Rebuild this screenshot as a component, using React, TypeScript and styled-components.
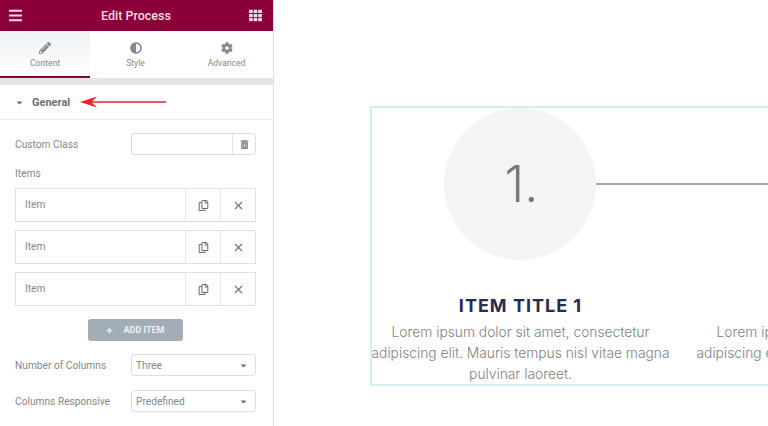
import React from "react";
import styled, { createGlobalStyle } from "styled-components";
import { FaBars, FaTh, FaPencilAlt, FaAdjust, FaCog, FaTrashAlt, FaRegCopy, FaPlus, FaCaretDown } from "react-icons/fa";
import { X } from "lucide-react";

const Global = createGlobalStyle`
  html, body { margin: 0; padding: 0; background: #fff; }
  * { box-sizing: border-box; }
`;
const Page = styled.div`
  display: flex; width: 768px; height: 426px; overflow: hidden; background: #fff;
  font-family: Roboto, "Liberation Sans", sans-serif;
`;
const Panel = styled.aside`
  flex: 0 0 274px; height: 426px; overflow: hidden; border-right: 1px solid #dfe2e5; background: #fff;
`;
const Header = styled.header`
  height: 31px; background: #8c003a; color: #f3dbe4; display: flex; align-items: center; justify-content: space-between;
  padding: 0 11px 0 8px; font-size: 12.5px; font-weight: 500;
  svg { display: block; }
`;
const Tabs = styled.nav`
  display: flex; height: 47px; background: #fff;
`;
const Tab = styled.div<{ $active?: boolean }>`
  flex: 0 0 91px; display: flex; flex-direction: column; align-items: center; padding-top: 11px; gap: 4px;
  color: #85898e; font-size: 8.5px;
  background: ${(p) => (p.$active ? "linear-gradient(#eef1f4, #fff)" : "#fff")};
  border-bottom: 2px solid ${(p) => (p.$active ? "#8c003a" : "transparent")};
  &:first-child { flex-basis: 90px; }
  svg { font-size: 12px; display: block; }
`;
const Band = styled.div`
  height: 7px; background: #e4e6e9;
`;
const SectionHead = styled.div`
  height: 35px; display: flex; align-items: center; padding-left: 15px; border-bottom: 1px solid #e8eaec;
  color: #6a6f75; font-size: 11px; font-weight: 700;
  svg.caret { font-size: 9px; margin-right: 8px; }
`;
const Arrow = styled.svg`
  margin-left: 10px; display: block;
`;
const Body = styled.div`
  padding: 13px 17px 0 15px; display: flex; flex-direction: column;
`;
const Control = styled.div<{ $mt?: number }>`
  display: flex; align-items: center; justify-content: space-between; height: 22px; margin-top: ${(p) => p.$mt ?? 0}px;
`;
const Label = styled.label`
  color: #84878c; font-size: 10.2px;
`;
const ItemsLabel = styled(Label)`
  margin-top: 12px; line-height: 13px;
`;
const InputGroup = styled.div`
  width: 125px; height: 22px; display: flex; border: 1px solid #dcdfe2; border-radius: 3px; background: #fff;
`;
const InputField = styled.div`
  flex: 1;
`;
const InputIcon = styled.div`
  flex: 0 0 23px; border-left: 1px solid #e2e4e7; display: flex; align-items: center; justify-content: center; color: #7d8288;
  svg { font-size: 9px; }
`;
const Row = styled.div`
  height: 34px; margin-top: 8px; display: flex; border: 1px solid #dfe2e5; background: #fff;
`;
const RowTitle = styled.div`
  flex: 1; padding: 0 0 2px 9px; display: flex; align-items: center; color: #84878c; font-size: 10.2px;
`;
const RowButton = styled.div`
  flex: 0 0 35px; border-left: 1px solid #e6e8ea; display: flex; align-items: center; justify-content: center; color: #6d7278;
  svg { font-size: 11px; display: block; }
`;
const AddButton = styled.button`
  align-self: center; margin: 13px 0 0; width: 95px; height: 22px; border: 0; border-radius: 3px; background: #a3adb7;
  color: #eef0f2; font: 700 9px Roboto, sans-serif; display: flex; align-items: center; justify-content: center; gap: 10px;
  svg { font-size: 7px; }
`;
const Select = styled.div`
  width: 125px; height: 22px; border: 1px solid #dcdfe2; border-radius: 3px; display: flex; align-items: center; justify-content: space-between;
  padding: 0 7px 0 4px; color: #84878c; font-size: 10.2px;
  svg { font-size: 9px; color: #6d7278; }
`;
const Canvas = styled.main`
  flex: 1; min-width: 0; overflow: hidden; padding: 106px 0 0 96px;
`;
const Widget = styled.section`
  width: max-content; height: 280px; border: 2px solid #d3eef7; display: grid; grid-template-columns: 297px 297px; column-gap: 28px;
`;
const Step = styled.article`
  display: flex; flex-direction: column; align-items: center;
`;
const Head = styled.div`
  align-self: stretch; display: flex; align-items: center; padding-left: 72px;
`;
const Circle = styled.div`
  flex: 0 0 152px; height: 152px; border-radius: 50%; background: #f4f4f4; display: flex; align-items: center; justify-content: center;
  color: #77787a; font: 300 50px Inter, sans-serif; letter-spacing: 0;
  padding-left: 3px;
`;
const Connector = styled.div`
  flex: 0 0 173px; height: 2px; background: #a8a8a8;
`;
const Title = styled.h3`
  margin: 35px 0 0; height: 22px; font: 700 18px/22px Inter, sans-serif; letter-spacing: 1px; color: #2a2a52; white-space: nowrap;
`;
const Text = styled.p`
  margin: 5px 0 0; width: 301px; flex: none; text-align: center; font: 300 13.8px/21px Inter, "Open Sans", sans-serif; color: #808185; white-space: nowrap;
`;

const items = ["Item", "Item", "Item"];

const Copy = () => (
  <>
    Lorem ipsum dolor sit amet, consectetur
    <br />
    adipiscing elit. Mauris tempus nisl vitae magna
    <br />
    pulvinar laoreet.
  </>
);

export default function App() {
  return (
    <Page>
      <Global />
      <Panel>
        <Header>
          <FaBars size={15} />
          <span>Edit Process</span>
          <FaTh size={13} />
        </Header>
        <Tabs>
          <Tab $active><FaPencilAlt /><span>Content</span></Tab>
          <Tab><FaAdjust /><span>Style</span></Tab>
          <Tab><FaCog /><span>Advanced</span></Tab>
        </Tabs>
        <Band />
        <SectionHead>
          <FaCaretDown className="caret" />
          General
          <Arrow width="86" height="12" viewBox="0 0 86 12">
            <path d="M0 6 L17 0.5 L12 5.2 L86 5.2 L86 6.8 L12 6.8 L17 11.5 Z" fill="#e8232c" />
          </Arrow>
        </SectionHead>
        <Body>
          <Control>
            <Label>Custom Class</Label>
            <InputGroup>
              <InputField />
              <InputIcon><FaTrashAlt /></InputIcon>
            </InputGroup>
          </Control>
          <ItemsLabel>Items</ItemsLabel>
          {items.map((t, i) => (
            <Row key={i}>
              <RowTitle>{t}</RowTitle>
              <RowButton><FaRegCopy /></RowButton>
              <RowButton><X size={13} strokeWidth={2} /></RowButton>
            </Row>
          ))}
          <AddButton><FaPlus /> ADD ITEM</AddButton>
          <Control $mt={13}>
            <Label>Number of Columns</Label>
            <Select>Three<FaCaretDown /></Select>
          </Control>
          <Control $mt={14}>
            <Label>Columns Responsive</Label>
            <Select>Predefined<FaCaretDown /></Select>
          </Control>
        </Body>
      </Panel>
      <Canvas>
        <Widget>
          <Step>
            <Head>
              <Circle>1.</Circle>
              <Connector />
            </Head>
            <Title>ITEM TITLE 1</Title>
            <Text><Copy /></Text>
          </Step>
          <Step>
            <Head>
              <Circle />
            </Head>
            <Title />
            <Text><Copy /></Text>
          </Step>
        </Widget>
      </Canvas>
    </Page>
  );
}
